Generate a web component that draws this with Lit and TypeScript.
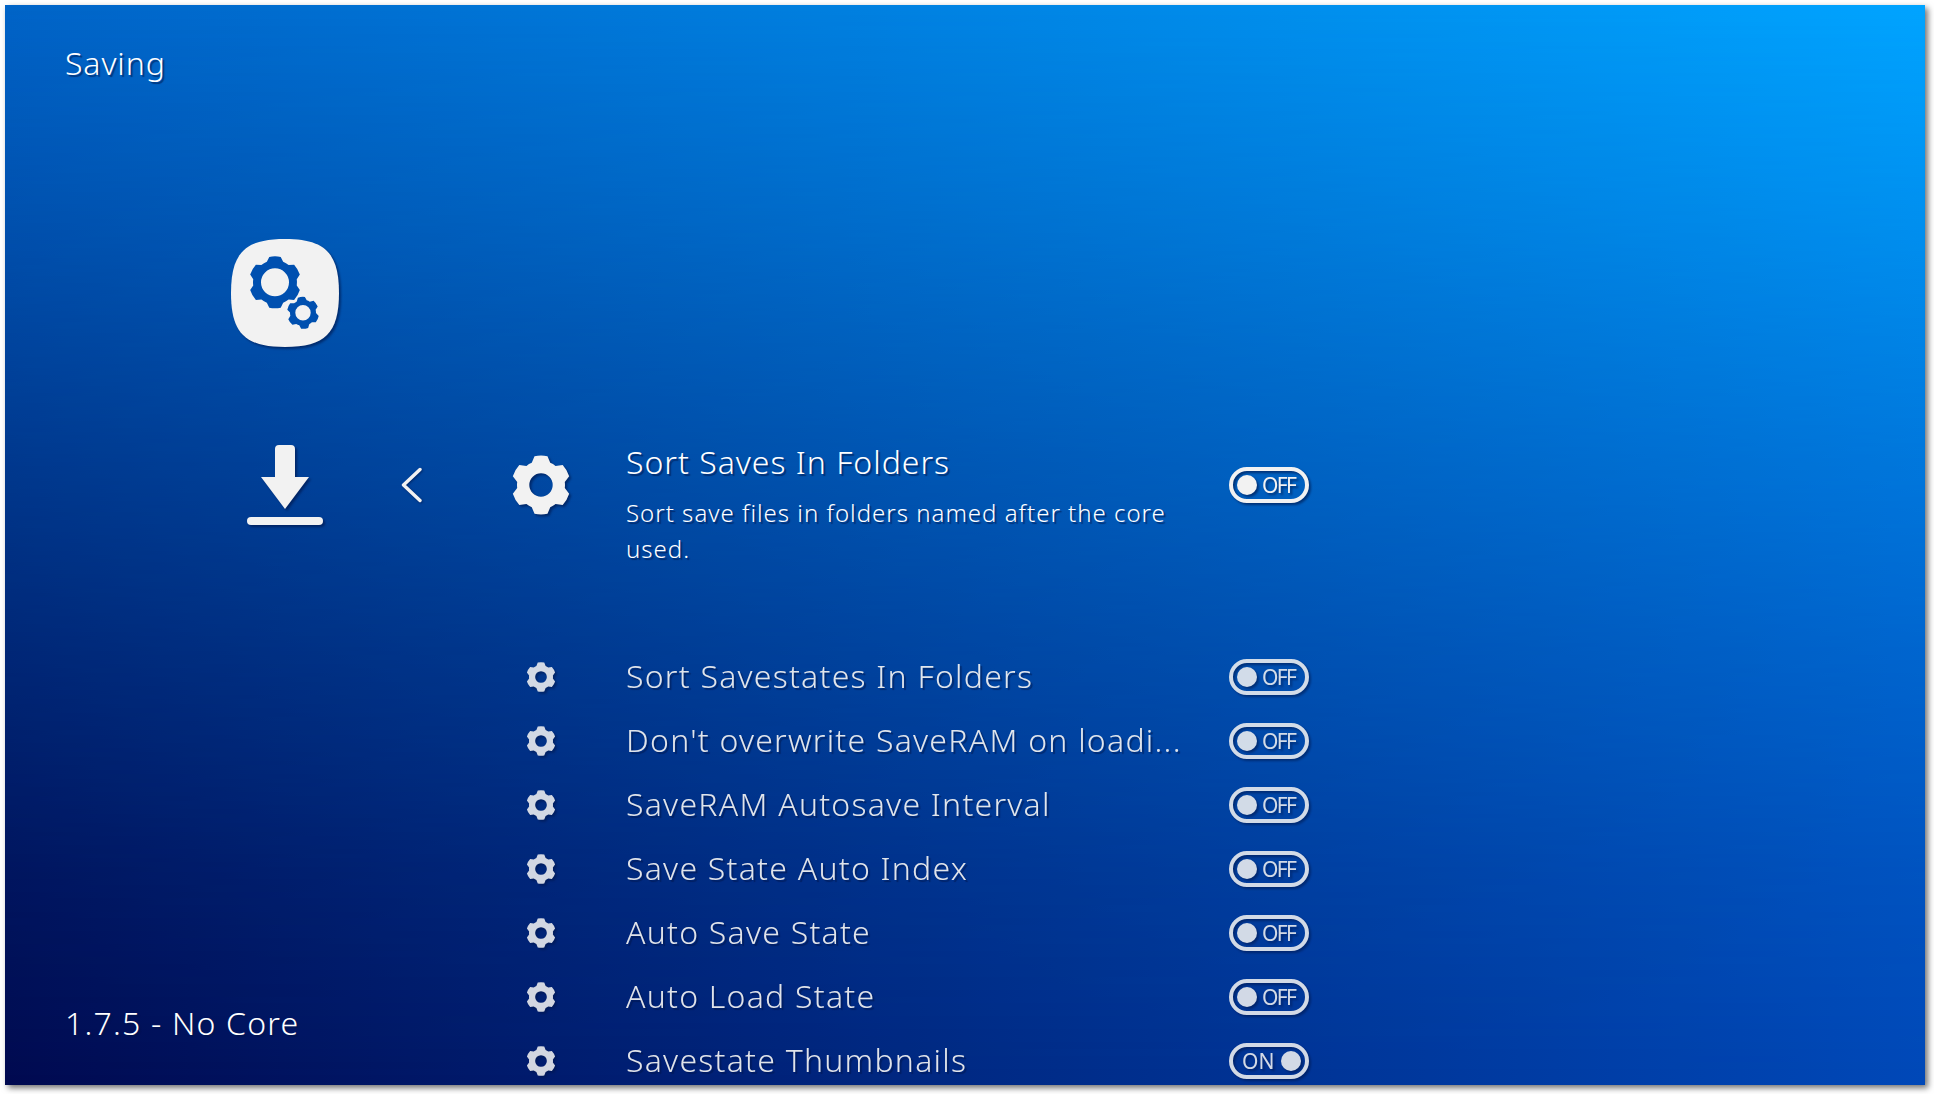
import { LitElement, html, css, svg } from "lit";
import { customElement } from "lit/decorators.js";

function gearPath(cx: number, cy: number, ro: number, rr: number, hole: number, teeth = 6, rot = -90) {
  const step = (Math.PI * 2) / teeth;
  const base = (rot * Math.PI) / 180;
  const tipHalf = Math.asin(0.22);
  const rootHalf = tipHalf * 1.45 * (ro / rr);
  const p = (r: number, a: number) => `${(cx + r * Math.cos(a)).toFixed(2)} ${(cy + r * Math.sin(a)).toFixed(2)}`;
  let d = "";
  for (let i = 0; i < teeth; i++) {
    const a = base + i * step;
    d += `${i === 0 ? "M" : "L"}${p(rr, a - rootHalf)} L${p(ro, a - tipHalf)} A${ro} ${ro} 0 0 1 ${p(ro, a + tipHalf)} L${p(rr, a + rootHalf)} `;
    const next = a + step - rootHalf;
    d += `A${rr} ${rr} 0 0 1 ${p(rr, next)} `;
  }
  d += `Z M${cx + hole} ${cy} A${hole} ${hole} 0 1 0 ${cx - hole} ${cy} A${hole} ${hole} 0 1 0 ${cx + hole} ${cy} Z`;
  return d;
}

const gear = (cls: string) => html`<svg class=${cls} viewBox="0 0 60 60">
  <path fill="#f2f2f2" fill-rule="evenodd" d=${gearPath(30, 30, 29.5, 24, 11.7)}></path>
</svg>`;

const ROWS: { label: string; on: boolean }[] = [
  { label: "Sort Savestates In Folders", on: false },
  { label: "Don't overwrite SaveRAM on loadi...", on: false },
  { label: "SaveRAM Autosave Interval", on: false },
  { label: "Save State Auto Index", on: false },
  { label: "Auto Save State", on: false },
  { label: "Auto Load State", on: false },
  { label: "Savestate Thumbnails", on: true },
];

@customElement("app-root")
export class AppRoot extends LitElement {
  static styles = css`
    :host {
      display: block;
      width: 1934px;
      height: 1094px;
      background: #fff;
      overflow: hidden;
    }
    .page {
      padding: 5px;
      box-sizing: border-box;
      width: 1934px;
      height: 1094px;
    }
    .window {
      position: relative;
      width: 1920px;
      height: 1080px;
      overflow: hidden;
      display: grid;
      grid-template-columns: 390px 90px 1fr;
      background: linear-gradient(90deg, #000a50 0%, #0048b8 100%);
      box-shadow: 3px 3px 6px rgba(0, 0, 0, 0.55);
      color: #fff;
      font-family: "Noto Sans", sans-serif;
      font-weight: 300;
    }
    .topfade {
      position: absolute;
      inset: 0;
      background: linear-gradient(90deg, #0064c8 0%, #00a4ff 100%);
      -webkit-mask-image: linear-gradient(180deg, #000 0%, rgba(0, 0, 0, 0.78) 20%, rgba(0, 0, 0, 0.54) 40%, rgba(0, 0, 0, 0.32) 60%, rgba(0, 0, 0, 0.13) 80%, transparent 100%);
      mask-image: linear-gradient(180deg, #000 0%, rgba(0, 0, 0, 0.78) 20%, rgba(0, 0, 0, 0.54) 40%, rgba(0, 0, 0, 0.32) 60%, rgba(0, 0, 0, 0.13) 80%, transparent 100%);
    }
    .left,
    .chev,
    .list {
      position: relative;
    }
    .left {
      display: flex;
      flex-direction: column;
      align-items: flex-start;
      padding-left: 60px;
      height: 1080px;
      box-sizing: border-box;
    }
    .title,
    .version {
      font-size: 32px;
      line-height: 44px;
      text-shadow: 2px 2px 1px rgba(0, 20, 70, 0.55);
    }
    .title {
      margin-top: 36px;
      letter-spacing: 0.9px;
    }
    .bigicon {
      width: 108px;
      height: 108px;
      margin: 154px 0 0 166px;
      filter: drop-shadow(2px 2px 1px rgba(0, 20, 70, 0.6));
    }
    .dl {
      width: 80px;
      height: 84px;
      margin: 98px 0 0 180px;
      filter: drop-shadow(2px 2px 1px rgba(0, 20, 70, 0.6));
    }
    .version {
      margin-top: auto;
      margin-bottom: 40px;
      letter-spacing: 1.2px;
    }
    .chev {
      padding: 461px 0 0 5px;
    }
    .chev svg {
      display: block;
      width: 24px;
      height: 38px;
      filter: drop-shadow(1px 1px 1px rgba(0, 20, 70, 0.6));
    }
    .list {
      padding-top: 436px;
      display: flex;
      flex-direction: column;
    }
    .row {
      display: grid;
      grid-template-columns: 112px 632px 80px;
      width: max-content;
      height: 64px;
      align-items: center;
      color: #f2f2f2;
      font-size: 32px;
      letter-spacing: 1.25px;
    }
    .row .gs,
    .row .tg {
      opacity: 0.87;
    }
    .row .label {
      opacity: 0.93;
      padding-left: 29px;
      margin-top: -4px;
      white-space: nowrap;
      text-shadow: 2px 2px 1px rgba(0, 20, 70, 0.55);
    }
    .cell {
      display: flex;
      align-items: center;
      justify-content: center;
    }
    .gs {
      width: 30px;
      height: 30px;
      filter: drop-shadow(2px 2px 1px rgba(0, 20, 70, 0.6));
    }
    .sel {
      height: 204px;
      align-items: start;
    }
    .sel .cell {
      height: 88px;
    }
    .gl {
      width: 60px;
      height: 60px;
      filter: drop-shadow(2px 2px 1px rgba(0, 20, 70, 0.6));
    }
    .sel .tg {
      opacity: 1;
    }
    .body {
      padding-left: 29px;
    }
    .sel .name {
      line-height: 44px;
      color: #fff;
      white-space: nowrap;
      letter-spacing: 1px;
      text-shadow: 2px 2px 1px rgba(0, 20, 70, 0.55);
      margin-top: -1px;
    }
    .desc {
      margin-top: 11px;
      width: 560px;
      font-size: 24px;
      line-height: 36px;
      letter-spacing: 1px;
      color: #fff;
      text-shadow: 2px 2px 1px rgba(0, 20, 70, 0.55);
    }
    .tg {
      box-sizing: border-box;
      width: 80px;
      height: 36px;
      border: 4px solid #f2f2f2;
      border-radius: 18px;
      display: flex;
      align-items: center;
      padding: 0 4px;
      gap: 5px;
      filter: drop-shadow(2px 2px 1px rgba(0, 20, 70, 0.6));
    }
    .tg i {
      flex: none;
      width: 20px;
      height: 20px;
      border-radius: 50%;
      background: #f2f2f2;
    }
    .tg span {
      font-size: 21px;
      line-height: 28px;
      letter-spacing: -1.6px;
      color: #f2f2f2;
      font-weight: 400;
    }
    .tg.on {
      padding: 0 4px 0 9px;
      justify-content: space-between;
    }
    .tg.on span {
      letter-spacing: 0;
    }
  `;

  private toggle(on: boolean) {
    return on
      ? html`<div class="tg on"><span>ON</span><i></i></div>`
      : html`<div class="tg"><i></i><span>OFF</span></div>`;
  }

  render() {
    return html`<div class="page">
      <div class="window">
        <div class="topfade"></div>
        <div class="left">
          <div class="title">Saving</div>
          <svg class="bigicon" viewBox="0 0 108 108">
            <path fill="#f2f2f2" d="M54 0C94 0 108 14 108 54C108 94 94 108 54 108C14 108 0 94 0 54C0 14 14 0 54 0Z"></path>
            ${svg`<path fill="#0050b0" fill-rule="evenodd" d=${gearPath(44, 43.3, 26, 22, 14)}></path>`}
            ${svg`<path fill="#0050b0" fill-rule="evenodd" d=${gearPath(72, 73.8, 16, 13, 7.7, 6, -96)}></path>`}
          </svg>
          <svg class="dl" viewBox="0 0 80 84">
            <path fill="#f2f2f2" d="M34 4a4 4 0 0 1 4-4h12a4 4 0 0 1 4 4V32H68L44 64L20 32H34Z" transform="translate(-4 0)"></path>
            <rect x="2" y="72" width="76" height="8" rx="4" fill="#f2f2f2"></rect>
          </svg>
          <div class="version">1.7.5 - No Core</div>
        </div>
        <div class="chev">
          <svg viewBox="0 0 24 38">
            <path d="M20 3.5L3.5 19L20 34.500" fill="none" stroke="#f2f2f2" stroke-width="3.400" stroke-linecap="round" stroke-linejoin="round"></path>
          </svg>
        </div>
        <div class="list">
          <div class="row sel">
            <div class="cell">${gear("gl")}</div>
            <div class="body">
              <div class="name">Sort Saves In Folders</div>
              <div class="desc">Sort save files in folders named after the core used.</div>
            </div>
            <div class="cell">${this.toggle(false)}</div>
          </div>
          ${ROWS.map(
            (r) => html`<div class="row">
              <div class="cell">${gear("gs")}</div>
              <div class="label">${r.label}</div>
              <div class="cell">${this.toggle(r.on)}</div>
            </div>`
          )}
        </div>
      </div>
    </div>`;
  }
}
